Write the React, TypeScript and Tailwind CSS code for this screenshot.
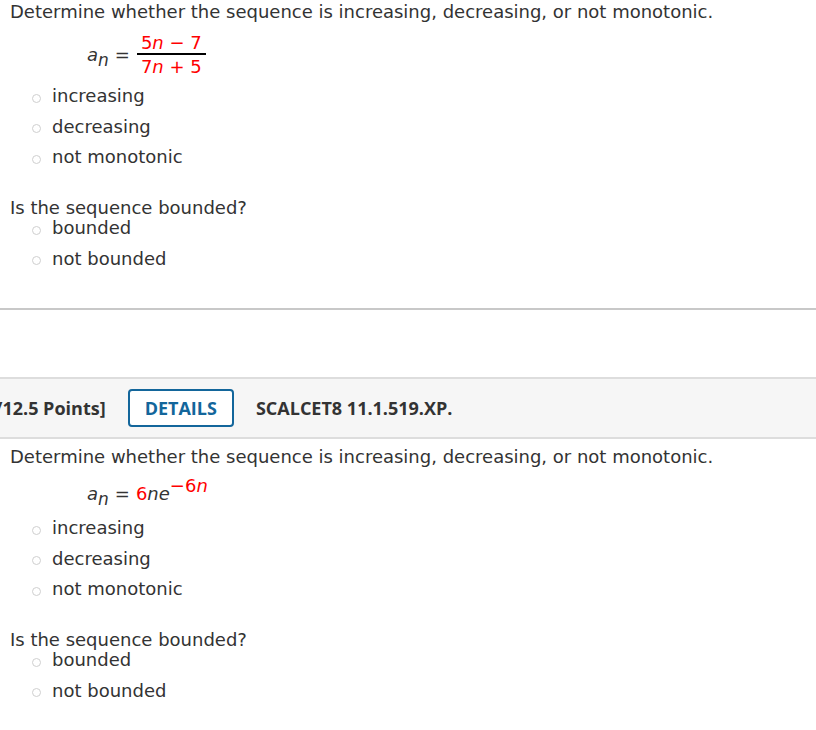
import React from "react";

const V = { fontFamily: '"DejaVu Sans", Verdana, sans-serif' };
const O = { fontFamily: '"Open Sans", "Noto Sans", sans-serif' };

function Opt({ label }: { label: string }) {
  return (
    <div className="h-[30.5px] flex items-start">
      <div className="h-[20px] flex items-center">
        <span className="ml-[32px] mt-[4px] w-[9px] h-[9px] rounded-full border border-[#cfcfcf] bg-white" />
        <span className="ml-[11px] leading-[20px]">{label}</span>
      </div>
    </div>
  );
}

function Options() {
  return (
    <div>
      <Opt label="increasing" />
      <Opt label="decreasing" />
      <Opt label="not monotonic" />
      <div className="mt-[20.5px] pl-[10px] h-[20px] leading-[20px]">Is the sequence bounded?</div>
      <Opt label="bounded" />
      <Opt label="not bounded" />
    </div>
  );
}

function An() {
  return (
    <span className="inline-flex items-baseline">
      <span className="italic">a</span>
      <span className="italic text-[17px] relative top-[5px]">n</span>
    </span>
  );
}

export default function App() {
  return (
    <div className="w-[816px] h-[730px] bg-white text-[#333] text-[18px] overflow-hidden" style={V}>
      <div className="pt-[2px] pl-[10px] h-[22px] leading-[20px]">
        Determine whether the sequence is increasing, decreasing, or not monotonic.
      </div>
      <div className="h-[64px] flex items-center pl-[87px]">
        <div className="flex items-center mt-[1px]">
          <An />
          <span className="ml-[6px]">=</span>
          <span className="ml-[7px] inline-flex flex-col items-center text-[#f00]">
            <span className="h-[21px] leading-[21px] px-[4px]">
              <span>5</span><span className="italic">n</span> − 7
            </span>
            <span className="w-full h-[2px] bg-black" />
            <span className="h-[22px] leading-[24px] px-[4px]">
              <span>7</span><span className="italic">n</span> + 5
            </span>
          </span>
        </div>
      </div>
      <Options />
      <div className="mt-[29px] h-[2px] bg-[#c8c8c8]" />
      <div className="mt-[67px] border-y-2 border-[#dddddd] bg-[#f6f6f6] h-[62px] flex items-center" style={O}>
        <span className="ml-[-5px] font-bold text-[18px] text-[#333] whitespace-nowrap">/12.5 Points]</span>
        <span className="ml-[22px] h-[38px] px-[15px] flex items-center border-2 border-[#13669b] rounded-[4px] text-[#13669b] font-bold text-[18px] bg-white">DETAILS</span>
        <span className="ml-[22px] font-bold text-[18px] text-[#333]">SCALCET8 11.1.519.XP.</span>
      </div>
      <div className="mt-[8px] pl-[10px] h-[20px] leading-[20px]">
        Determine whether the sequence is increasing, decreasing, or not monotonic.
      </div>
      <div className="h-[51px] flex items-center pl-[87px]">
        <div className="flex items-baseline mt-[2px]">
          <An />
          <span className="ml-[6px]">=</span>
          <span className="ml-[6px] text-[#f00]">6</span>
          <span className="italic">ne</span>
          <span className="text-[#f00] relative top-[-8px]">−6<span className="italic">n</span></span>
        </div>
      </div>
      <Options />
    </div>
  );
}
